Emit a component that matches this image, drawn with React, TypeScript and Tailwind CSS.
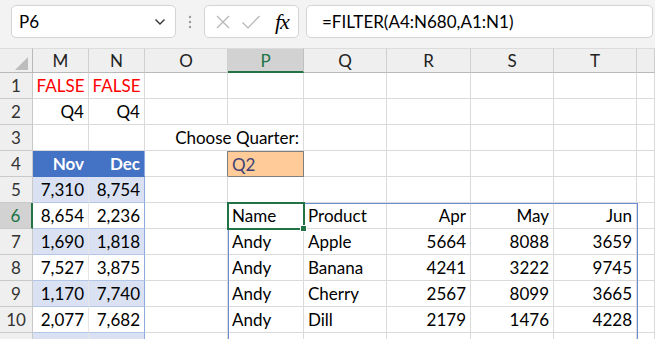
import React from "react";

type CellSpec = { t?: string; c?: string };

const baseLayout =
  "flex items-center px-[4px] whitespace-nowrap border-r border-b border-[#dadada]";

function cellClass(c?: string) {
  const x = c ?? "";
  const bg = /(^|\s)bg-/.test(x) ? "" : "bg-white";
  const fg = /(^|\s)text-(\[#|white)/.test(x) ? "" : "text-black";
  return `${baseLayout} ${bg} ${fg} ${x}`;
}

const rowHead =
  "flex items-center justify-center border-r border-b border-[#c9c9c9] bg-[#efefef] text-[#333]";

const blueRow = "bg-[#d9e1f2] border-b-[#b4c6e7]";
const whiteRow = "bg-white border-b-[#b4c6e7]";

function mn(v1: string, v2: string, band: boolean): CellSpec[] {
  const b = band ? blueRow : whiteRow;
  return [
    { t: v1, c: `${b} justify-end border-r-[#e6e6e6]` },
    { t: v2, c: `${b} justify-end border-r-[#8eaadb]` },
  ];
}

const R = "justify-end";

const rows: { n: string; sel?: boolean; cells: CellSpec[] }[] = [
  {
    n: "1",
    cells: [
      { t: "FALSE", c: "justify-center text-[#ff0000]" },
      { t: "FALSE", c: "justify-center text-[#ff0000]" },
      {}, {}, {}, {}, {}, {}, {},
    ],
  },
  {
    n: "2",
    cells: [{ t: "Q4", c: R }, { t: "Q4", c: R }, {}, {}, {}, {}, {}, {}, {}],
  },
  {
    n: "3",
    cells: [
      {}, {},
      { c: "border-r-transparent" },
      { t: "Choose Quarter:", c: "justify-end relative z-10 bg-transparent" },
      {}, {}, {}, {}, {},
    ],
  },
  {
    n: "4",
    cells: [
      { t: "Nov", c: "justify-end bg-[#4472c4] text-white font-bold border-r-[#4472c4] border-b-[#4472c4]" },
      { t: "Dec", c: "justify-end bg-[#4472c4] text-white font-bold border-r-[#8eaadb] border-b-[#4472c4]" },
      { c: "border-r-[#7f7f7f]" },
      { t: "Q2", c: "bg-[#ffcc99] text-[#3f3f76] border-r-[#7f7f7f] border-b-[#7f7f7f] border-t border-t-[#7f7f7f]" },
      {}, {}, {}, {}, {},
    ],
  },
  {
    n: "5",
    cells: [...mn("7,310", "8,754", true), {}, {}, {}, {}, {}, {}, {}],
  },
  {
    n: "6",
    sel: true,
    cells: [
      ...mn("8,654", "2,236", false),
      {},
      { t: "Name" },
      { t: "Product" },
      { t: "Apr", c: R },
      { t: "May", c: R },
      { t: "Jun", c: R },
      {},
    ],
  },
  {
    n: "7",
    cells: [...mn("1,690", "1,818", true), {}, { t: "Andy" }, { t: "Apple" }, { t: "5664", c: R }, { t: "8088", c: R }, { t: "3659", c: R }, {}],
  },
  {
    n: "8",
    cells: [...mn("7,527", "3,875", false), {}, { t: "Andy" }, { t: "Banana" }, { t: "4241", c: R }, { t: "3222", c: R }, { t: "9745", c: R }, {}],
  },
  {
    n: "9",
    cells: [...mn("1,170", "7,740", true), {}, { t: "Andy" }, { t: "Cherry" }, { t: "2567", c: R }, { t: "8099", c: R }, { t: "3665", c: R }, {}],
  },
  {
    n: "10",
    cells: [...mn("2,077", "7,682", false), {}, { t: "Andy" }, { t: "Dill" }, { t: "2179", c: R }, { t: "1476", c: R }, { t: "4228", c: R }, {}],
  },
  {
    n: "",
    cells: [...mn("", "", true), {}, {}, {}, {}, {}, {}, {}],
  },
];

const colLetters = ["M", "N", "O", "P", "Q", "R", "S", "T", ""];

function FormulaBar() {
  return (
    <div className="h-[48px] bg-[#f3f3f3] flex items-start pt-[5px] pl-[11px] pr-[2px]">
      <div className="w-[165px] h-[33px] bg-white border border-[#d4d4d4] rounded-[5px] flex items-center pl-[7px] pr-[8px] text-[17px] text-black">
        <span className="flex-1">P6</span>
        <svg width="12" height="8" viewBox="0 0 12 8" className="mr-[1px]">
          <path d="M1.5 1.5 L6 6 L10.5 1.5" fill="none" stroke="#333" strokeWidth="1.4" />
        </svg>
      </div>
      <div className="w-[28px] h-[33px] flex items-center justify-center">
        <svg width="4" height="16" viewBox="0 0 4 16">
          <circle cx="2" cy="3" r="1.2" fill="#9a9a9a" />
          <circle cx="2" cy="8" r="1.2" fill="#9a9a9a" />
          <circle cx="2" cy="13" r="1.2" fill="#9a9a9a" />
        </svg>
      </div>
      <div className="w-[95px] h-[33px] bg-white border border-[#d4d4d4] rounded-[5px] flex items-center pl-[10px] gap-[10px]">
        <svg width="16" height="16" viewBox="0 0 16 16">
          <path d="M2 2 L14 14 M14 2 L2 14" stroke="#b5b5b5" strokeWidth="1.2" fill="none" />
        </svg>
        <svg width="20" height="16" viewBox="0 0 20 16">
          <path d="M1.5 8.5 L7 14 L18.5 2" stroke="#b5b5b5" strokeWidth="1.2" fill="none" />
        </svg>
        <span className="font-['Liberation_Serif',serif] italic text-[22px] leading-none text-black ml-[4px] tracking-[-1px]">
          fx
        </span>
      </div>
      <div className="flex-1 h-[33px] ml-[7px] bg-white border border-[#d4d4d4] rounded-[5px] flex items-center pl-[15px] text-[17px] text-black">
        =FILTER(A4:N680,A1:N1)
      </div>
    </div>
  );
}

export default function App() {
  return (
    <div className="w-[655px] h-[339px] overflow-hidden bg-white font-['Lato','Open_Sans',sans-serif] text-[17px] leading-none">
      <FormulaBar />
      <div className="relative grid grid-cols-[33px_56px_56px_83px_76px_83px_84px_83px_83px_18px] grid-rows-[25px_repeat(11,26px)]">
        <div className="relative bg-[#efefef] border-r border-b border-[#b9b9b9] border-t border-t-[#dcdcdc]">
          <svg className="absolute left-[15px] top-[8px]" width="14" height="14" viewBox="0 0 14 14">
            <polygon points="13,0 13,13 0,13" fill="#bdbdbd" />
          </svg>
        </div>
        {colLetters.map((l, i) => (
          <div
            key={l + i}
            className={
              l === "P"
                ? "flex items-center justify-center bg-[#d2d2d2] text-[#217346] border-r border-r-[#c0c0c0] border-t border-t-[#dcdcdc] border-b-2 border-b-[#217346]"
                : "flex items-center justify-center bg-[#efefef] text-[#222] border-r border-r-[#cfcfcf] border-t border-t-[#dcdcdc] border-b border-b-[#b9b9b9]"
            }
          >
            {l}
          </div>
        ))}
        {rows.map((r, ri) => (
          <React.Fragment key={ri}>
            <div
              className={
                r.sel
                  ? "flex items-center justify-center bg-[#d2d2d2] text-[#217346] border-b border-b-[#c9c9c9] border-r-2 border-r-[#217346]"
                  : rowHead
              }
            >
              {r.n}
            </div>
            {r.cells.map((c, i) => (
              <div key={i} className={cellClass(c.c)}>
                {c.t}
              </div>
            ))}
          </React.Fragment>
        ))}
        <div className="absolute left-[228px] top-[155px] w-[410px] h-[200px] border border-[#6a8fd6] pointer-events-none" />
        <div className="absolute left-[227px] top-[154px] w-[78px] h-[28px] border-2 border-[#217346] pointer-events-none" />
        <div className="absolute left-[300px] top-[177px] w-[7px] h-[7px] bg-[#217346] border border-white pointer-events-none" />
      </div>
    </div>
  );
}
